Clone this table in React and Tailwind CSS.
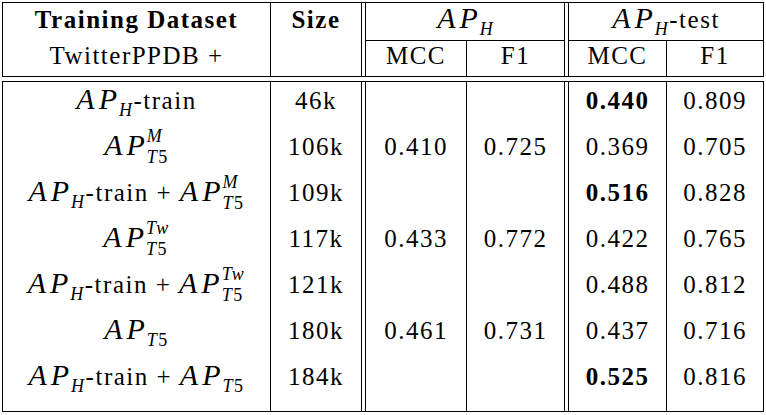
import React from 'react'

// widened text, the table in the screenshot is wider than Times at this size
const Sc = ({ children, bold }) => (
  <span className={bold ? 'whitespace-nowrap tracking-[1.5px] font-bold' : 'whitespace-nowrap tracking-[1.5px]'}>
    {children}
  </span>
)

const AP = ({ sub, sup }) => (
  <span className="inline-flex items-baseline">
    <span className="italic text-[30px] leading-none tracking-[4px]">AP</span>
    {sup ? (
      <span className="relative -top-[13px] -ml-[2px] inline-flex flex-col items-start gap-[3px] text-[18px] leading-none">
        <span className="italic">{sup}</span>
        <span>{sub}</span>
      </span>
    ) : (
      <span className="relative top-[7px] -ml-[2px] text-[18px] leading-none">{sub}</span>
    )}
  </span>
)

const T5 = (
  <>
    <span className="italic">T</span>5
  </>
)

const H = <span className="italic">H</span>

const train = (
  <>
    <AP sub={H} />
    -train
  </>
)

const rows = [
  { ds: train, size: '46k', a: '', b: '', c: '0.440', cb: true, d: '0.809' },
  { ds: <AP sub={T5} sup="M" />, size: '106k', a: '0.410', b: '0.725', c: '0.369', d: '0.705' },
  { ds: <>{train} + <AP sub={T5} sup="M" /></>, size: '109k', a: '', b: '', c: '0.516', cb: true, d: '0.828' },
  { ds: <AP sub={T5} sup="Tw" />, size: '117k', a: '0.433', b: '0.772', c: '0.422', d: '0.765' },
  { ds: <>{train} + <AP sub={T5} sup="Tw" /></>, size: '121k', a: '', b: '', c: '0.488', d: '0.812' },
  { ds: <AP sub={T5} />, size: '180k', a: '0.461', b: '0.731', c: '0.437', d: '0.716' },
  { ds: <>{train} + <AP sub={T5} /></>, size: '184k', a: '', b: '', c: '0.525', cb: true, d: '0.816' },
]

const Col = ({ className, items, bolds = [] }) => (
  <div className={className + ' flex flex-col pb-[7px]'}>
    {items.map((it, i) => (
      <div key={i} className="h-[46px] text-center leading-[38px]">
        {it ? <Sc bold={bolds[i]}>{it}</Sc> : null}
      </div>
    ))}
  </div>
)

const App = () => {
  return (
    <div className="w-[766px] h-[415px] overflow-hidden bg-white pt-[2px] pl-[2px] font-['Liberation_Serif'] text-[25px] text-black">
      {/* Header */}
      <div className="flex w-[762px] border border-black">
        <div className="w-[268px] border-r border-black text-center">
          <div className="h-[38px] leading-[34px]">
            <Sc bold>Training Dataset</Sc>
          </div>
          <div className="h-[35px] leading-[30px]">
            <Sc>TwitterPPDB +</Sc>
          </div>
        </div>
        <div className="w-[91px] border-r border-black text-center">
          <div className="h-[38px] leading-[34px]">
            <Sc bold>Size</Sc>
          </div>
        </div>
        <div className="w-[3px]" />
        <div className="w-[200px] border-x border-black text-center">
          <div className="h-[38px] border-b border-black leading-[34px]">
            <AP sub={H} />
          </div>
          <div className="flex h-[35px] leading-[30px]">
            <div className="w-[101px] border-r border-black">
              <Sc>MCC</Sc>
            </div>
            <div className="w-[97px]">
              <Sc>F1</Sc>
            </div>
          </div>
        </div>
        <div className="w-[3px]" />
        <div className="w-[195px] border-l border-black text-center">
          <div className="h-[38px] border-b border-black leading-[34px]">
            <Sc>
              <AP sub={H} />
              -test
            </Sc>
          </div>
          <div className="flex h-[35px] leading-[30px]">
            <div className="w-[98px] border-r border-black">
              <Sc>MCC</Sc>
            </div>
            <div className="w-[96px]">
              <Sc>F1</Sc>
            </div>
          </div>
        </div>
      </div>

      {/* Body */}
      <div className="mt-[4px] flex w-[762px] border border-black">
        <Col className="w-[268px] border-r border-black" items={rows.map((r) => r.ds)} />
        <Col className="w-[91px] border-r border-black" items={rows.map((r) => r.size)} />
        <div className="w-[3px]" />
        <div className="flex w-[200px] border-x border-black">
          <Col className="w-[101px] border-r border-black" items={rows.map((r) => r.a)} />
          <Col className="w-[97px]" items={rows.map((r) => r.b)} />
        </div>
        <div className="w-[3px]" />
        <div className="flex w-[195px] border-l border-black">
          <Col
            className="w-[98px] border-r border-black"
            items={rows.map((r) => r.c)}
            bolds={rows.map((r) => r.cb)}
          />
          <Col className="w-[96px]" items={rows.map((r) => r.d)} />
        </div>
      </div>
    </div>
  )
}

export default App
